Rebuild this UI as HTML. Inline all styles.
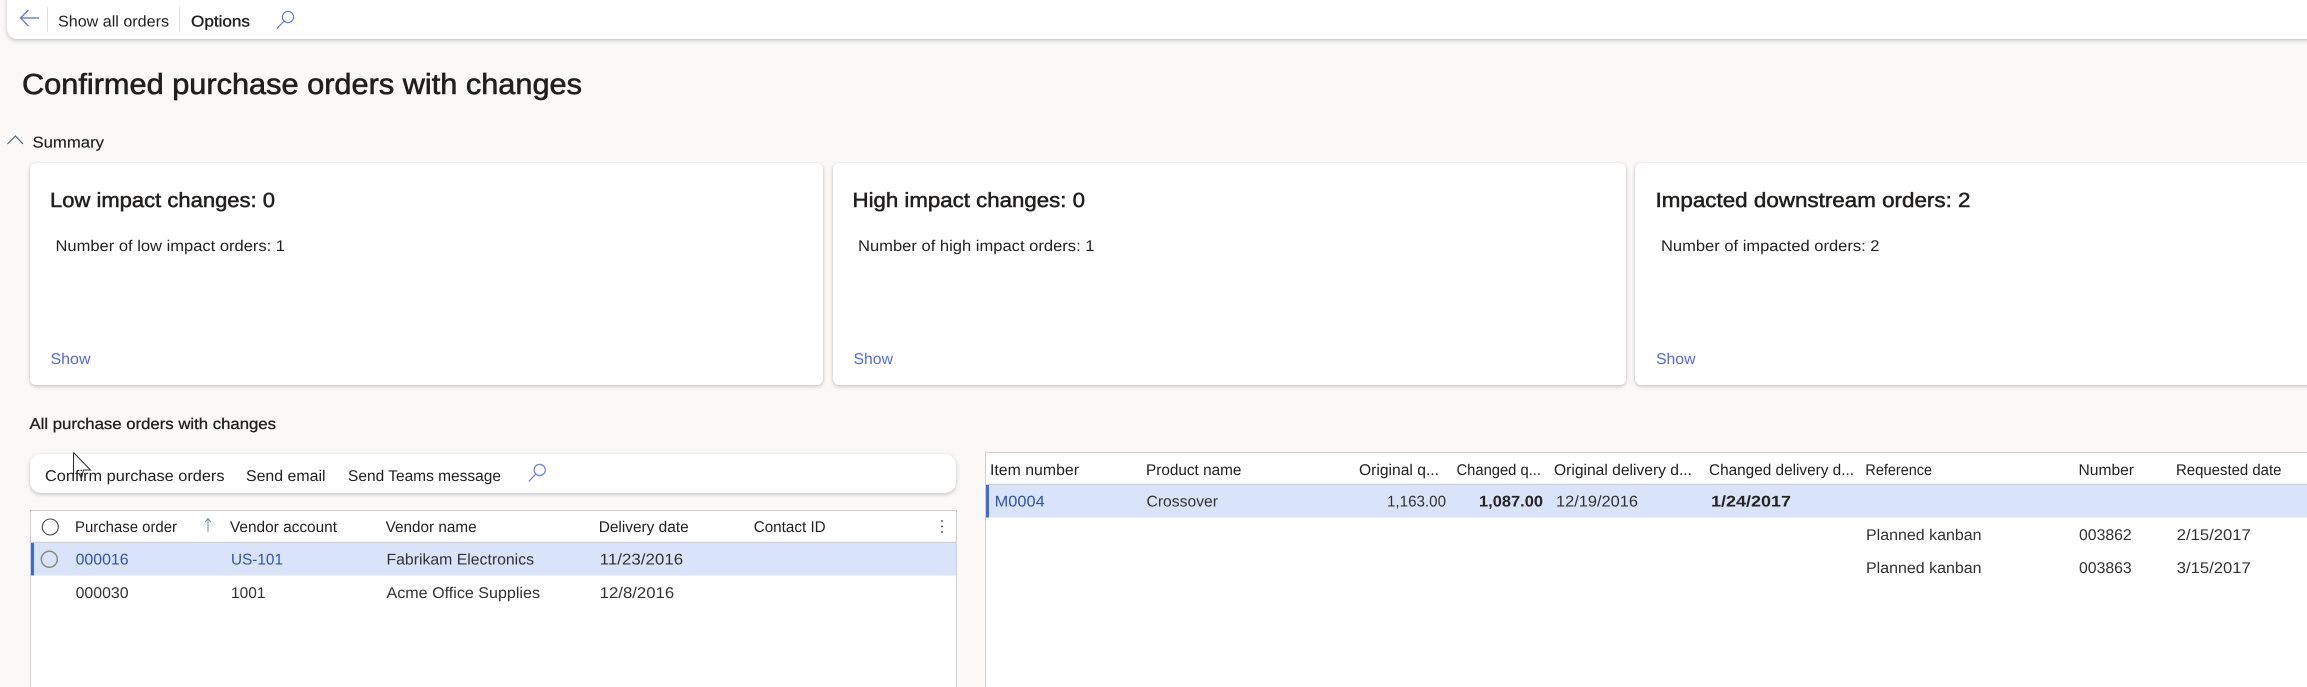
<!DOCTYPE html>
<html lang="en"><head><meta charset="utf-8"><title>Confirmed purchase orders with changes</title>
<style>
html,body{margin:0;padding:0;width:2307px;height:687px;overflow:hidden;background:#faf9f8}
#w{position:absolute;left:0;top:0;width:2307px;height:687px;overflow:hidden;background:#faf9f8}
.b{position:absolute;background:#fff;box-sizing:border-box}
.card{top:163px;height:222px;border-radius:6px;box-shadow:0 1.5px 4px rgba(0,0,0,.2),0 0 2px rgba(0,0,0,.08)}
svg{position:absolute;left:0;top:0}
text{font-family:"Liberation Sans",sans-serif;font-size:15.5px;fill:#323130;text-rendering:geometricPrecision}
.h{fill:#201f1e}
.s{fill:#201f1e;stroke:#201f1e;stroke-width:.5px}
.t{font-size:20.5px}
.l{fill:#2f52b5}
.sh{fill:#4f6bed}
.bd{font-weight:700;fill:#252423}
</style></head><body>
<div id="w">
<div class="b" style="left:7px;top:-10px;width:2320px;height:49px;border-radius:10px;box-shadow:0 1.5px 4px rgba(0,0,0,.22)"></div>
<div class="b card" style="left:30px;width:793px"></div>
<div class="b card" style="left:833px;width:793px"></div>
<div class="b card" style="left:1635px;width:700px"></div>
<div class="b" style="left:30px;top:453.5px;width:926px;height:39.5px;border-radius:11px;box-shadow:0 1.5px 4px rgba(0,0,0,.22)"></div>
<div class="b" style="left:30px;top:510px;width:927px;height:190px;border:1.5px solid #d2d0ce"></div>
<div class="b" style="left:985px;top:452px;width:1340px;height:250px;border:1.5px solid #d2d0ce"></div>
<svg width="2307" height="687" viewBox="0 0 2307 687" xmlns="http://www.w3.org/2000/svg">
<!-- top bar -->
<path d="M39 18H20.5M28.5 10l-8 8 8 8" fill="none" stroke="#4f6bed" stroke-width="1.2"/>
<path d="M47.5 7v25M179.5 7v25" stroke="#e1dfdd" stroke-width="1"/>
<text x="58" y="26.5" textLength="111" lengthAdjust="spacingAndGlyphs" class="h">Show all orders</text>
<text x="191" y="26.5" textLength="59" lengthAdjust="spacingAndGlyphs" class="s" style="stroke-width:.35px">Options</text>
<circle cx="288" cy="17" r="5.6" fill="none" stroke="#6a7de8" stroke-width="1.2"/><path d="M284 21.2L277 28.5" stroke="#6a7de8" stroke-width="1.2"/>
<!-- title -->
<text x="22" y="94" textLength="560" lengthAdjust="spacingAndGlyphs" class="s" style="font-size:29px;stroke-width:.6px">Confirmed purchase orders with changes</text>
<path d="M7.5 144l8-8 7.5 8" fill="none" stroke="#4a5a70" stroke-width="1.1"/>
<text x="32.5" y="147.5" textLength="71.5" lengthAdjust="spacingAndGlyphs" class="s" style="stroke-width:.15px">Summary</text>
<!-- cards -->
<text x="50" y="207" textLength="225" lengthAdjust="spacingAndGlyphs" class="s t">Low impact changes: 0</text>
<text x="55.5" y="251" textLength="229.5" lengthAdjust="spacingAndGlyphs" class="h">Number of low impact orders: 1</text>
<text x="50.5" y="364" textLength="40" lengthAdjust="spacingAndGlyphs" class="sh">Show</text>
<text x="852.5" y="207" textLength="232.5" lengthAdjust="spacingAndGlyphs" class="s t">High impact changes: 0</text>
<text x="858" y="251" textLength="236.5" lengthAdjust="spacingAndGlyphs" class="h">Number of high impact orders: 1</text>
<text x="853.5" y="364" textLength="39.5" lengthAdjust="spacingAndGlyphs" class="sh">Show</text>
<text x="1655.5" y="207" textLength="315" lengthAdjust="spacingAndGlyphs" class="s t">Impacted downstream orders: 2</text>
<text x="1661" y="251" textLength="218.5" lengthAdjust="spacingAndGlyphs" class="h">Number of impacted orders: 2</text>
<text x="1656" y="364" textLength="39.5" lengthAdjust="spacingAndGlyphs" class="sh">Show</text>
<text x="29.5" y="429" textLength="246.5" lengthAdjust="spacingAndGlyphs" class="s" style="stroke-width:.3px">All purchase orders with changes</text>
<!-- left toolbar -->
<text x="45" y="481" textLength="179.5" lengthAdjust="spacingAndGlyphs" class="h">Confirm purchase orders</text>
<text x="246" y="481" textLength="79.5" lengthAdjust="spacingAndGlyphs" class="h">Send email</text>
<text x="348" y="481" textLength="153" lengthAdjust="spacingAndGlyphs" class="h">Send Teams message</text>
<circle cx="539.7" cy="470" r="5.6" fill="none" stroke="#6a7de8" stroke-width="1.2"/><path d="M535.7 474.2L528.7 481.5" stroke="#6a7de8" stroke-width="1.2"/>
<!-- left grid -->
<path d="M31 542.5H956" stroke="#d2d0ce" stroke-width="1.5"/>
<rect x="31" y="543" width="925" height="32.5" fill="#d9e4fa"/>
<rect x="31" y="543" width="3" height="32.5" fill="#3b69e0"/>
<circle cx="50.3" cy="527" r="8" fill="none" stroke="#484644" stroke-width="1.1"/>
<circle cx="49.3" cy="559.3" r="8" fill="none" stroke="#8a8886" stroke-width="1.5"/>
<text x="75" y="532" textLength="102" lengthAdjust="spacingAndGlyphs" class="h">Purchase order</text>
<path d="M208 532V518.5M205 522l3-3.5 3 3.5" fill="none" stroke="#7a8a99" stroke-width="1"/>
<text x="230" y="532" textLength="107" lengthAdjust="spacingAndGlyphs" class="h">Vendor account</text>
<text x="385.6" y="532" textLength="91" lengthAdjust="spacingAndGlyphs" class="h">Vendor name</text>
<text x="598.7" y="532" textLength="90" lengthAdjust="spacingAndGlyphs" class="h">Delivery date</text>
<text x="753.7" y="532" textLength="72" lengthAdjust="spacingAndGlyphs" class="h">Contact ID</text>
<circle cx="942" cy="521" r=".9" fill="#323130"/><circle cx="942" cy="526.5" r=".9" fill="#323130"/><circle cx="942" cy="532" r=".9" fill="#323130"/>
<text x="75.6" y="564.7" textLength="53" lengthAdjust="spacingAndGlyphs" class="l">000016</text>
<text x="231" y="564.7" textLength="52" lengthAdjust="spacingAndGlyphs" class="l">US-101</text>
<text x="386.5" y="564.7" textLength="147.5" lengthAdjust="spacingAndGlyphs">Fabrikam Electronics</text>
<text x="599.7" y="564.7" textLength="83.5" lengthAdjust="spacingAndGlyphs">11/23/2016</text>
<text x="75.6" y="598" textLength="53" lengthAdjust="spacingAndGlyphs">000030</text>
<text x="231" y="598" textLength="34.5" lengthAdjust="spacingAndGlyphs">1001</text>
<text x="386.5" y="598" textLength="153.5" lengthAdjust="spacingAndGlyphs">Acme Office Supplies</text>
<text x="599.7" y="598" textLength="74.5" lengthAdjust="spacingAndGlyphs">12/8/2016</text>
<!-- right grid -->
<path d="M986 484.5H2307" stroke="#d2d0ce" stroke-width="1.5"/>
<rect x="986" y="485" width="1321" height="32.5" fill="#d9e4fa"/>
<rect x="986" y="485" width="3" height="32.5" fill="#3b69e0"/>
<text x="990" y="475" textLength="89" lengthAdjust="spacingAndGlyphs" class="h">Item number</text>
<text x="1146" y="475" textLength="95.4" lengthAdjust="spacingAndGlyphs" class="h">Product name</text>
<text x="1359" y="475" textLength="80" lengthAdjust="spacingAndGlyphs" class="h">Original q...</text>
<text x="1456.5" y="475" textLength="84.5" lengthAdjust="spacingAndGlyphs" class="h">Changed q...</text>
<text x="1554" y="475" textLength="138" lengthAdjust="spacingAndGlyphs" class="h">Original delivery d...</text>
<text x="1709" y="475" textLength="145" lengthAdjust="spacingAndGlyphs" class="h">Changed delivery d...</text>
<text x="1865.4" y="475" textLength="66.6" lengthAdjust="spacingAndGlyphs" class="h">Reference</text>
<text x="2078.5" y="475" textLength="55.5" lengthAdjust="spacingAndGlyphs" class="h">Number</text>
<text x="2176" y="475" textLength="105.4" lengthAdjust="spacingAndGlyphs" class="h">Requested date</text>
<text x="994.7" y="506.7" textLength="50" lengthAdjust="spacingAndGlyphs" class="l">M0004</text>
<text x="1146.5" y="506.7" textLength="71.5" lengthAdjust="spacingAndGlyphs">Crossover</text>
<text x="1387" y="506.7" textLength="59" lengthAdjust="spacingAndGlyphs">1,163.00</text>
<text x="1479" y="506.7" textLength="64" lengthAdjust="spacingAndGlyphs" class="bd">1,087.00</text>
<text x="1556" y="506.7" textLength="82" lengthAdjust="spacingAndGlyphs">12/19/2016</text>
<text x="1711" y="506.7" textLength="80" lengthAdjust="spacingAndGlyphs" class="bd">1/24/2017</text>
<text x="1866" y="540" textLength="115.5" lengthAdjust="spacingAndGlyphs">Planned kanban</text>
<text x="2079" y="540" textLength="52.7" lengthAdjust="spacingAndGlyphs">003862</text>
<text x="2176.8" y="540" textLength="74" lengthAdjust="spacingAndGlyphs">2/15/2017</text>
<text x="1866" y="573" textLength="115.5" lengthAdjust="spacingAndGlyphs">Planned kanban</text>
<text x="2079" y="573" textLength="52.7" lengthAdjust="spacingAndGlyphs">003863</text>
<text x="2176.8" y="573" textLength="74" lengthAdjust="spacingAndGlyphs">3/15/2017</text>
<!-- cursor -->
<path d="M73.5 452.5V478M73.5 452.5L90.5 470H83.5L81 479.5M79 473l2.5 6" fill="none" stroke="#2b2b2b" stroke-width="1"/>
</svg>
</div>
</body></html>
